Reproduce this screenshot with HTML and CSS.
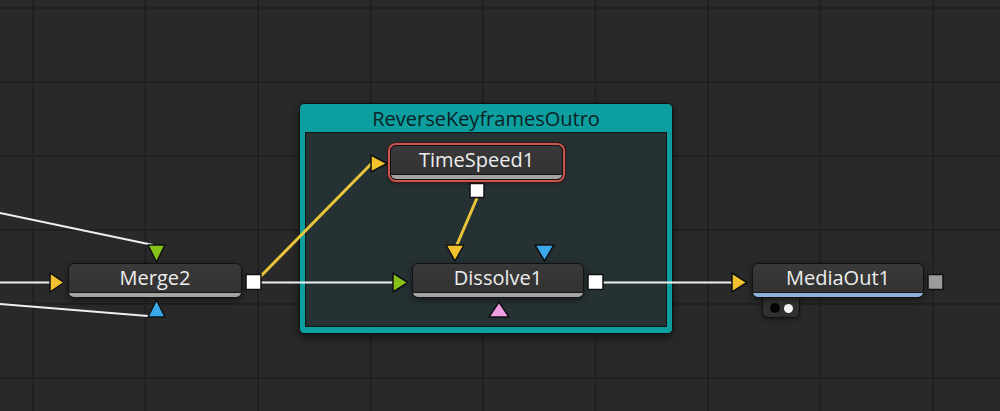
FILE: index.html
```html
<!DOCTYPE html>
<html>
<head>
<meta charset="utf-8">
<link rel="stylesheet" href="styles.css">
</head>
<body>
<div class="canvas">
  <div class="group">
    <div class="group-title">ReverseKeyframesOutro</div>
    <div class="group-body"></div>
  </div>

  <div class="node node-merge">
    <div class="node-label">Merge2</div>
    <div class="node-strip"></div>
  </div>

  <div class="node node-timespeed">
    <div class="node-label">TimeSpeed1</div>
    <div class="node-strip"></div>
  </div>

  <div class="node node-dissolve">
    <div class="node-label">Dissolve1</div>
    <div class="node-strip"></div>
  </div>

  <div class="view-tab">
    <span class="dot dot-black"></span>
    <span class="dot dot-white"></span>
  </div>
  <div class="node node-mediaout">
    <div class="node-label">MediaOut1</div>
    <div class="node-strip strip-blue"></div>
  </div>

  <svg class="wires" width="1000" height="411" viewBox="0 0 1000 411">
    <g class="wire-white">
      <line x1="0" y1="282.5" x2="50" y2="282.5"/>
      <line x1="0" y1="213" x2="153" y2="245"/>
      <line x1="0" y1="304" x2="148" y2="316"/>
      <line x1="261" y1="282.5" x2="393" y2="282.5"/>
      <line x1="603" y1="282.5" x2="732" y2="282.5"/>
    </g>
    <g class="wire-yellow">
      <line x1="260" y1="277" x2="373" y2="162"/>
      <line x1="477" y1="198" x2="456" y2="247"/>
    </g>
    <g class="port">
      <polygon class="p-yellow" points="50,273 64,282.5 50,292"/>
      <polygon class="p-green" points="148,245 165,245 156.5,262"/>
      <polygon class="p-blue" points="148,317 165,317 156.5,300"/>
      <rect class="p-white" x="246" y="274.5" width="15" height="15"/>

      <polygon class="p-yellow" points="371,155 387,163.5 371,172"/>
      <rect class="p-white" x="470" y="183.5" width="14" height="14"/>

      <polygon class="p-green" points="393,273 408,282.5 393,292"/>
      <polygon class="p-yellow" points="446,245 464,245 455,261"/>
      <polygon class="p-blue" points="535,245 554,245 544.5,261"/>
      <polygon class="p-pink" points="489,317 509,317 499,302"/>
      <rect class="p-white" x="588" y="274.5" width="15" height="15"/>

      <polygon class="p-yellow" points="732,273 747,282.5 732,292"/>
      <rect class="p-grey" x="928" y="274.5" width="15" height="15"/>
    </g>
  </svg>
</div>
</body>
</html>
```

FILE: styles.css
```css
html, body {
  margin: 0;
  padding: 0;
  background: #292929;
}

.canvas {
  position: relative;
  width: 1000px;
  height: 411px;
  overflow: hidden;
  background-color: #292929;
  background-image:
    linear-gradient(to right, #202020 0, #202020 2px, transparent 2px),
    linear-gradient(to bottom, #202020 0, #202020 2px, transparent 2px);
  background-size: 112.5px 74px, 112.5px 74px;
  background-position: 32px 0, 0 7px;
  font-family: "Open Sans", "Noto Sans", sans-serif;
}

.group {
  position: absolute;
  left: 299px;
  top: 103px;
  width: 374px;
  height: 231px;
  box-sizing: border-box;
  background: #0d9fa0;
  border: 1px solid #0b1414;
  border-radius: 5px;
  box-shadow: 0 3px 8px rgba(0, 0, 0, 0.55);
  display: flex;
  flex-direction: column;
  padding: 0 5px 6px 5px;
}

.group-title {
  height: 28px;
  line-height: 29px;
  text-align: center;
  color: #0b2224;
  font-size: 20px;
}

.group-body {
  flex: 1;
  background: #263133;
  border: 1px solid #0c1515;
}

.node {
  position: absolute;
  box-sizing: border-box;
  display: flex;
  flex-direction: column;
  background: linear-gradient(to bottom, #393939, #313131);
  border: 1px solid #121212;
  border-radius: 6px;
  overflow: hidden;
  box-shadow: 0 2px 6px rgba(0, 0, 0, 0.5);
}

.node-label {
  flex: 1;
  display: flex;
  align-items: center;
  justify-content: center;
  color: #ededed;
  font-size: 20px;
  padding-bottom: 1px;
}

.node-strip {
  height: 4px;
  background: #a3a3a3;
  border-top: 1px solid #151515;
}

.strip-blue {
  background: #8cb0da;
}

.node-merge {
  left: 68px;
  top: 263px;
  width: 174px;
  height: 35px;
}

.node-timespeed {
  left: 390px;
  top: 145px;
  width: 173px;
  height: 35px;
  box-shadow: 0 0 0 2px #c9574f, 0 0 0 3px #3a1614, 0 2px 6px rgba(0, 0, 0, 0.5);
}

.node-dissolve {
  left: 412px;
  top: 263px;
  width: 172px;
  height: 35px;
}

.node-mediaout {
  left: 752px;
  top: 263px;
  width: 172px;
  height: 35px;
}

.view-tab {
  position: absolute;
  left: 762px;
  top: 294px;
  width: 38px;
  height: 24px;
  box-sizing: border-box;
  padding-top: 4px;
  background: #303030;
  border: 1px solid #121212;
  border-radius: 0 0 6px 6px;
  display: flex;
  align-items: center;
  justify-content: center;
  gap: 4px;
  box-shadow: 0 2px 4px rgba(0, 0, 0, 0.4);
}

.dot {
  display: block;
  border-radius: 50%;
}

.dot-black {
  width: 10px;
  height: 10px;
  background: #050505;
}

.dot-white {
  width: 9px;
  height: 9px;
  background: #f4f4f4;
}

.wires {
  position: absolute;
  left: 0;
  top: 0;
}

.wire-white line {
  stroke: #efefef;
  stroke-width: 2;
}

.wire-yellow line {
  stroke: #e9c53c;
  stroke-width: 3;
}

.port polygon,
.port rect {
  stroke: #101010;
  stroke-width: 1.5;
  stroke-linejoin: round;
}

.p-yellow { fill: #f2c22e; }
.p-green { fill: #86c21a; }
.p-blue { fill: #3aa9ec; }
.p-pink { fill: #f19de2; }
.p-white { fill: #ffffff; }
.p-grey { fill: #9b9b9b; }
```
